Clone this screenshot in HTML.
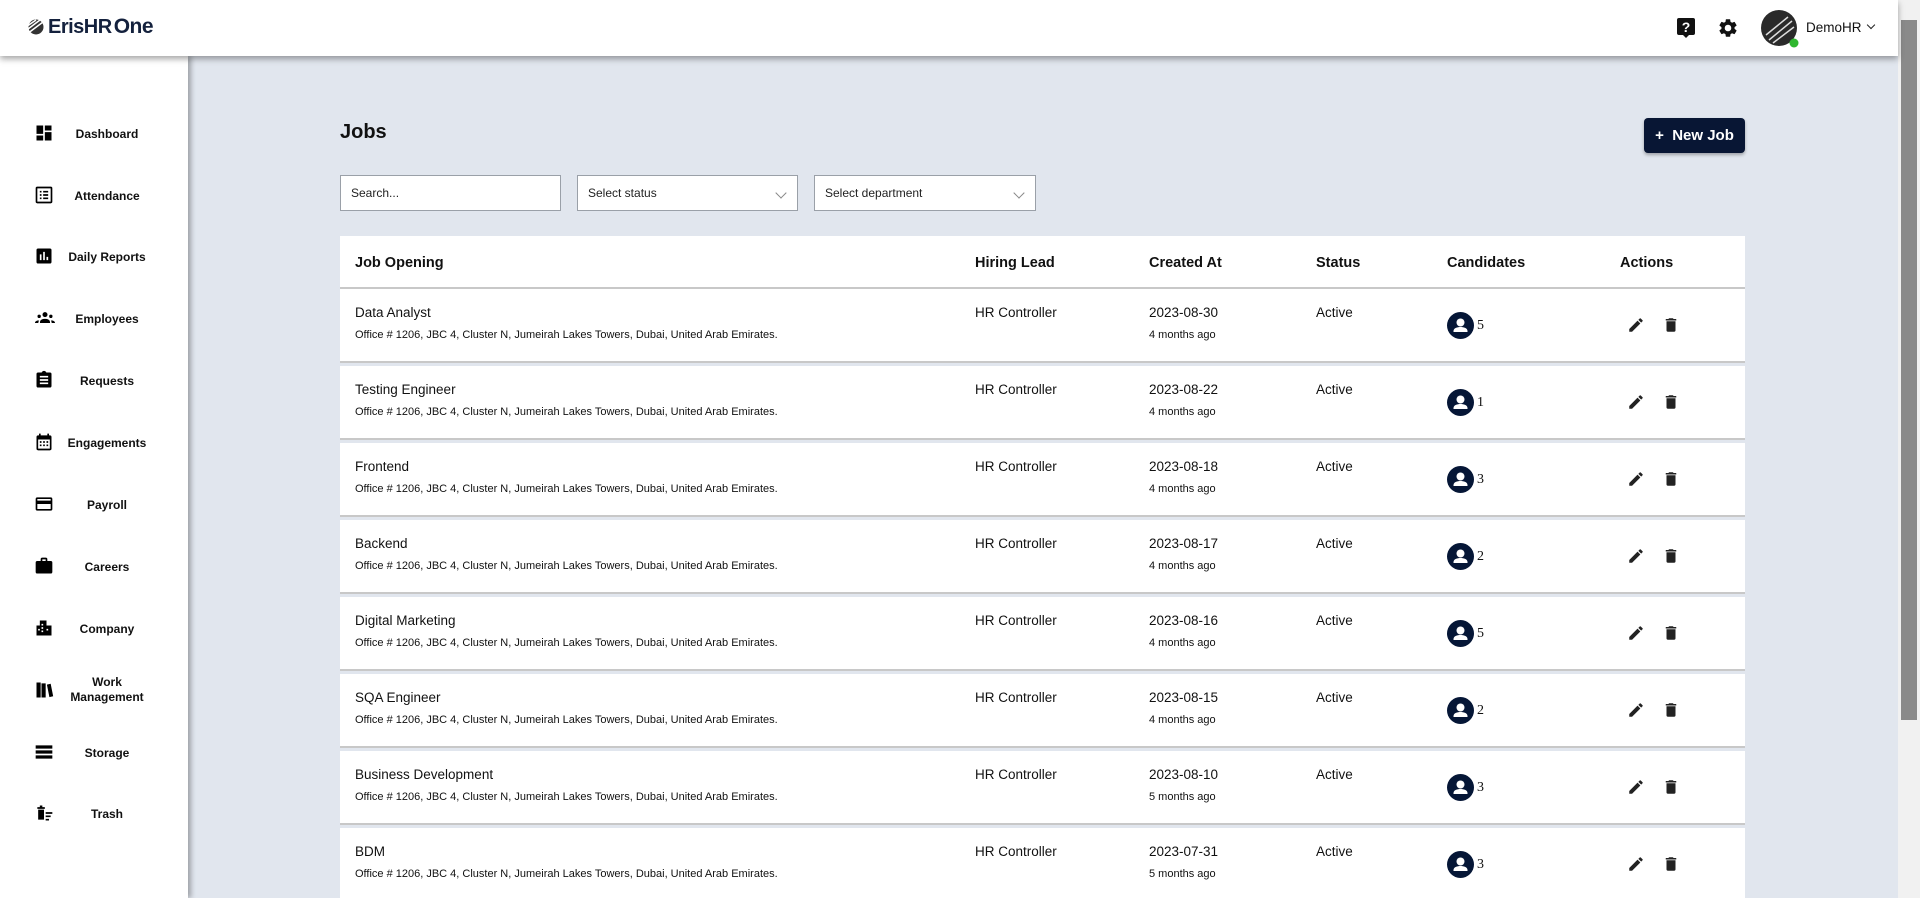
<!DOCTYPE html>
<html style="width:1920px;height:898px;overflow:hidden"><head><meta charset="utf-8"><style>
*{box-sizing:border-box;margin:0;padding:0}
body{width:1920px;height:898px;overflow:hidden;background:#e1e6ee;font-family:"Liberation Sans",sans-serif;color:#111;position:relative}
.hdr{position:absolute;left:0;top:0;width:1898px;height:56px;background:#fff;box-shadow:0 3px 6px rgba(0,0,0,.35);z-index:3}
.logo{position:absolute;left:22px;top:15px;font-weight:bold;font-size:20px;color:#14213d;letter-spacing:-0.5px;display:flex;align-items:center;gap:2px}
.side{position:absolute;left:0;top:56px;width:188px;height:842px;background:#fff;box-shadow:3px 0 5px rgba(0,0,0,.3);z-index:2}
.it{position:absolute;left:0;width:188px;height:30px}
.it svg{position:absolute;left:34px;top:5px}
.it span{position:absolute;left:62px;width:90px;text-align:center;font-weight:bold;font-size:12px;color:#111;top:9px;line-height:15px}
.scroll{position:absolute;right:0;top:0;width:22px;height:898px;background:#f1f1f1}
.scroll div{position:absolute;left:3px;top:20px;width:16px;height:700px;background:#8a8a8a}
h1{position:absolute;left:340px;top:121px;font-size:20px;font-weight:600}
.btn{position:absolute;left:1644px;top:118px;width:101px;height:35px;background:#081634;border-radius:4px;color:#fff;font-size:15px;font-weight:bold;line-height:35px;text-align:center;box-shadow:0 2px 3px rgba(0,0,0,.3)}
.inp{position:absolute;top:175px;height:36px;background:#fff;border:1px solid #9aa0a8;font-size:12px;line-height:34px;padding-left:10px;color:#222}
.inp i{position:absolute;right:12px;top:13px;width:8px;height:8px;border-right:1.5px solid #888;border-bottom:1.5px solid #888;transform:rotate(45deg)}
.clip{position:absolute;left:340px;top:236px;width:1405px;height:662px;overflow:hidden}
.th{height:53px;background:#fff;border-bottom:2px solid #c8c8c8;position:relative;font-weight:bold;font-size:14.5px}
.th span,.row span{position:absolute}
.th span{top:19px}
.row{height:74px;background:#fff;border-bottom:2px solid #c8c8c8;margin-bottom:3px;position:relative;font-size:13.5px}
.t1{top:16px}.t2{top:40px;font-size:11px}
.cand{position:absolute;left:1107px;top:23px;width:27px;height:27px;border-radius:50%;background:#051636}
.cn{left:1137px;top:29px;font-family:"Liberation Serif",serif;font-size:14px}
.ed{position:absolute;left:1287px;top:27px}.dl{position:absolute;left:1322px;top:26px}
</style></head><body>
<div class="hdr">
 <div class="logo"><svg width="24" height="16" viewBox="0 0 24 16"><circle cx="14" cy="8" r="7.5" fill="#333"/><path d="M2 13L18 1M5 15L21 3M1 10L14 1" stroke="#fff" stroke-width="1.5"/></svg>ErisHR <span style="font-size:21px">One</span></div>
 <svg style="position:absolute;left:1676px;top:17px" width="20" height="22" viewBox="0 0 20 22"><rect x="1" y="1" width="18" height="17" rx="2" fill="#111"/><path d="M7 18l3 3 3-3z" fill="#111"/><text x="10" y="15" fill="#fff" font-size="14" font-weight="bold" text-anchor="middle" font-family="Liberation Sans">?</text></svg>
 <svg style="position:absolute;left:1717px;top:17px" width="22" height="22" viewBox="0 0 24 24"><path fill="#111" d="M19.14 12.94c.04-.3.06-.61.06-.94 0-.32-.02-.64-.07-.94l2.03-1.58a.49.49 0 00.12-.61l-1.92-3.32a.49.49 0 00-.59-.22l-2.39.96c-.5-.38-1.03-.7-1.62-.94l-.36-2.54a.48.48 0 00-.48-.41h-3.84c-.24 0-.43.17-.47.41l-.36 2.54c-.59.24-1.13.57-1.62.94l-2.39-.96a.49.49 0 00-.59.22L2.74 8.87c-.12.21-.08.47.12.61l2.03 1.58c-.05.3-.09.63-.09.94s.02.64.07.94l-2.03 1.58a.49.49 0 00-.12.61l1.92 3.32c.12.22.37.29.59.22l2.39-.96c.5.38 1.03.7 1.62.94l.36 2.54c.05.24.24.41.48.41h3.84c.24 0 .44-.17.47-.41l.36-2.54c.59-.24 1.13-.56 1.62-.94l2.39.96c.22.08.47 0 .59-.22l1.92-3.32c.12-.22.07-.47-.12-.61l-2.01-1.58zM12 15.6A3.6 3.6 0 1112 8.4a3.6 3.6 0 010 7.2z"/></svg>
 <svg style="position:absolute;left:1760px;top:9px" width="42" height="42" viewBox="0 0 42 42"><circle cx="19" cy="19" r="18" fill="#2a2a2a"/><path d="M6 26L28 8M9 31L32 12M13 34L34 18" stroke="#ddd" stroke-width="1.5"/><circle cx="34" cy="34" r="4.5" fill="#2fb62f"/></svg>
 <div style="position:absolute;left:1806px;top:20px;font-size:13.5px">DemoHR</div>
 <div style="position:absolute;left:1868px;top:22px;width:6px;height:6px;border-right:1.5px solid #222;border-bottom:1.5px solid #222;transform:rotate(45deg)"></div>
</div>
<div class="side">
 <div class="it" style="top:62px"><svg width="20" height="20" viewBox="0 0 24 24"><path d="M3 13h8V3H3zm0 8h8v-6H3zm10 0h8V11h-8zm0-18v6h8V3z"/></svg><span>Dashboard</span></div>
 <div class="it" style="top:124px"><svg width="20" height="20" viewBox="0 0 24 24"><rect x="3" y="3" width="18" height="18" rx="1" fill="none" stroke="#000" stroke-width="2"/><path d="M7 7h2v2H7zm4 0h6v2h-6zM7 11h2v2H7zm4 0h6v2h-6zM7 15h2v2H7zm4 0h6v2h-6z"/></svg><span>Attendance</span></div>
 <div class="it" style="top:185px"><svg width="20" height="20" viewBox="0 0 24 24"><path d="M19 3H5a2 2 0 00-2 2v14a2 2 0 002 2h14a2 2 0 002-2V5a2 2 0 00-2-2zM9 17H7v-7h2zm4 0h-2V7h2zm4 0h-2v-4h2z"/></svg><span>Daily Reports</span></div>
 <div class="it" style="top:247px"><svg width="22" height="20" viewBox="0 0 24 24"><circle cx="12" cy="8" r="3"/><circle cx="5" cy="10" r="2"/><circle cx="19" cy="10" r="2"/><path d="M6 17c0-3 3-4 6-4s6 1 6 4v1H6zM0 18c0-2 2-3 4-3l1 .2c-.7.8-1 1.8-1 2.8zm24 0c0-2-2-3-4-3l-1 .2c.7.8 1 1.8 1 2.8z"/></svg><span>Employees</span></div>
 <div class="it" style="top:309px"><svg width="20" height="20" viewBox="0 0 24 24"><path d="M19 3h-4.2C14.4 1.8 13.3 1 12 1s-2.4.8-2.8 2H5a2 2 0 00-2 2v14a2 2 0 002 2h14a2 2 0 002-2V5a2 2 0 00-2-2zm-2 14H7v-2h10zm0-4H7v-2h10zm0-4H7V7h10z"/></svg><span>Requests</span></div>
 <div class="it" style="top:371px"><svg width="20" height="20" viewBox="0 0 24 24"><path d="M19 4h-1V2h-2v2H8V2H6v2H5a2 2 0 00-2 2v14a2 2 0 002 2h14a2 2 0 002-2V6a2 2 0 00-2-2zm0 16H5V9h14zM7 11h2v2H7zm4 0h2v2h-2zm4 0h2v2h-2zM7 15h2v2H7zm4 0h2v2h-2zm4 0h2v2h-2z"/></svg><span>Engagements</span></div>
 <div class="it" style="top:433px"><svg width="20" height="20" viewBox="0 0 24 24"><path d="M20 4H4a2 2 0 00-2 2v12a2 2 0 002 2h16a2 2 0 002-2V6a2 2 0 00-2-2zm0 14H4v-6h16zm0-10H4V6h16z"/></svg><span>Payroll</span></div>
 <div class="it" style="top:495px"><svg width="20" height="20" viewBox="0 0 24 24"><path d="M20 6h-4V4a2 2 0 00-2-2h-4a2 2 0 00-2 2v2H4a2 2 0 00-2 2v11a2 2 0 002 2h16a2 2 0 002-2V8a2 2 0 00-2-2zm-6 0h-4V4h4z"/></svg><span>Careers</span></div>
 <div class="it" style="top:557px"><svg width="20" height="20" viewBox="0 0 24 24"><path d="M3 21V9h4V3h8v6h6v12zm6-14v2h2V7zm0 4v2h2v-2zm0 4v2h2v-2zm-4-2v2h2v-2zm10 0v2h2v-2z"/></svg><span>Company</span></div>
 <div class="it" style="top:618px"><svg width="20" height="22" viewBox="0 0 24 24"><path d="M3 3h5v18H3zm6 1h5v17H9zm6.5 1.5l4.5-1 3 15-4.5 1z"/></svg><span style="top:1px">Work Management</span></div>
 <div class="it" style="top:681px"><svg width="20" height="20" viewBox="0 0 24 24"><path d="M2 4h20v4H2zm0 6h20v4H2zm0 6h20v4H2z"/></svg><span>Storage</span></div>
 <div class="it" style="top:742px"><svg width="20" height="20" viewBox="0 0 24 24"><path d="M4 5h9v2H4zm1 3h7v12H5zm9 3h8v2h-8zm0 4h6v2h-6zm0 4h4v2h-4zM7 3h3v2H7z"/></svg><span>Trash</span></div>
</div>
<div class="scroll"><div></div></div>
<h1>Jobs</h1>
<div class="btn">+&nbsp;&nbsp;New Job</div>
<div class="inp" style="left:340px;width:221px">Search...</div>
<div class="inp" style="left:577px;width:221px">Select status<i></i></div>
<div class="inp" style="left:814px;width:222px">Select department<i></i></div>
<div class="clip">
 <div class="th"><span style="left:15px">Job Opening</span><span style="left:635px">Hiring Lead</span><span style="left:809px">Created At</span><span style="left:976px">Status</span><span style="left:1107px">Candidates</span><span style="left:1280px">Actions</span></div>
 <div id="rows"></div>
</div>
<script>
var d=[["Data Analyst","2023-08-30","4",5],["Testing Engineer","2023-08-22","4",1],["Frontend","2023-08-18","4",3],["Backend","2023-08-17","4",2],["Digital Marketing","2023-08-16","4",5],["SQA Engineer","2023-08-15","4",2],["Business Development","2023-08-10","5",3],["BDM","2023-07-31","5",3]];
var h="";d.forEach(function(r){h+='<div class="row"><span class="t1" style="left:15px">'+r[0]+'</span><span class="t2" style="left:15px">Office # 1206, JBC 4, Cluster N, Jumeirah Lakes Towers, Dubai, United Arab Emirates.</span><span class="t1" style="left:635px">HR Controller</span><span class="t1" style="left:809px">'+r[1]+'</span><span class="t2" style="left:809px">'+r[2]+' months ago</span><span class="t1" style="left:976px">Active</span><div class="cand"><svg width="27" height="27" viewBox="0 0 27 27"><circle cx="13.5" cy="10.5" r="4" fill="#fff"/><path d="M6.5 19c0-3 4-4 7-4s7 1 7 4v1h-14z" fill="#fff"/></svg></div><span class="cn">'+r[3]+'</span><svg class="ed" width="18" height="18" viewBox="0 0 24 24"><path fill="#222" d="M3 17.25V21h3.75L17.81 9.94l-3.75-3.75zM20.71 7.04a1 1 0 000-1.41l-2.34-2.34a1 1 0 00-1.41 0l-1.83 1.83 3.75 3.75z"/></svg><svg class="dl" width="18" height="20" viewBox="0 0 24 24"><path fill="#222" d="M6 19a2 2 0 002 2h8a2 2 0 002-2V7H6zM19 4h-3.5l-1-1h-5l-1 1H5v2h14z"/></svg></div>'});
document.getElementById("rows").innerHTML=h;
</script>
</body></html>
